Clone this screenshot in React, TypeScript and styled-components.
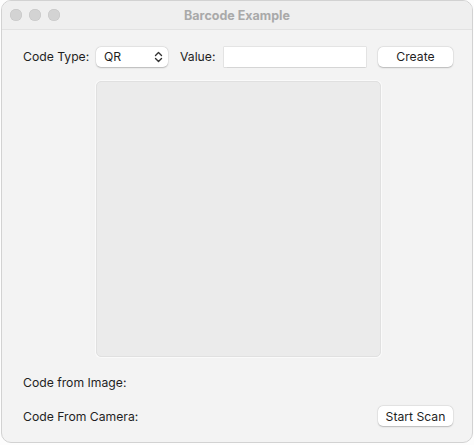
import React, { useState } from 'react'
import styled, { createGlobalStyle } from 'styled-components'

const GlobalStyle = createGlobalStyle`
  html, body {
    margin: 0;
    padding: 0;
    background: #fdfdfd;
  }
  body {
    font-family: Inter, "Liberation Sans", Arial, sans-serif;
    -webkit-font-smoothing: antialiased;
  }
`

const Window = styled.div`
  box-sizing: border-box;
  width: 472px;
  height: 443px;
  margin-left: 1px;
  background: #f3f3f3;
  border: 1px solid #d2d2d2;
  border-radius: 10px;
  overflow: hidden;
  display: flex;
  flex-direction: column;
`

const TitleBar = styled.div`
  position: relative;
  height: 28px;
  flex: none;
  background: #efefef;
  border-bottom: 1px solid #e2e2e2;
  display: flex;
  align-items: center;
  justify-content: center;
`

const Lights = styled.div`
  position: absolute;
  left: 8px;
  top: 8px;
  display: flex;
  gap: 7px;
`

const Light = styled.span`
  width: 12px;
  height: 12px;
  border-radius: 50%;
  background: #d3d3d3;
  box-shadow: inset 0 0 0 0.5px #c4c4c4;
`

const Title = styled.div`
  font-size: 12.5px;
  font-weight: 700;
  color: #a9a9a9;
`

const Content = styled.div`
  flex: 1;
  display: flex;
  flex-direction: column;
  padding: 16px 19px 0 21px;
`

const Row = styled.div`
  display: flex;
  align-items: center;
  height: 21px;
`

const Label = styled.span<{ $width?: number }>`
  font-size: 12.2px;
  color: #1f1f1f;
  white-space: nowrap;
  ${({ $width }) => ($width ? `width: ${$width}px; flex: none;` : '')}
`

const PopUp = styled.div`
  box-sizing: border-box;
  width: 72px;
  height: 20px;
  background: #fff;
  border-radius: 5px;
  box-shadow: 0 0.5px 1.5px rgba(0, 0, 0, 0.22), 0 0 0 0.5px rgba(0, 0, 0, 0.06);
  display: flex;
  align-items: center;
  justify-content: space-between;
  padding: 0 5px 0 8px;
  font-size: 12.2px;
  color: #1f1f1f;
  margin-right: 12px;
`

const TextInput = styled.input`
  box-sizing: border-box;
  width: 142px;
  height: 20px;
  border: none;
  outline: none;
  background: #fff;
  box-shadow: 0 0 0 0.5px #d6d6d6, 0 0.5px 1px rgba(0, 0, 0, 0.12);
  padding: 0 4px;
  font: inherit;
  font-size: 12.2px;
`

const Button = styled.button`
  box-sizing: border-box;
  margin-left: auto;
  width: 75px;
  height: 20px;
  border: none;
  border-radius: 5px;
  background: #fff;
  box-shadow: 0 0.5px 1.5px rgba(0, 0, 0, 0.22), 0 0 0 0.5px rgba(0, 0, 0, 0.06);
  font: inherit;
  font-size: 12.2px;
  color: #1f1f1f;
  padding: 0;
`

const ImageWell = styled.div`
  box-sizing: border-box;
  align-self: center;
  width: 285px;
  height: 276px;
  margin: 14px 0 0 0;
  background: #ebebeb;
  border: 1px solid #e0e0e0;
  border-radius: 5px;
  box-shadow: 0 0 0 1px #fafafa;
`

const InfoRow = styled(Row)<{ $top: number }>`
  margin-top: ${({ $top }) => $top}px;
  height: 20px;
`

function Chevrons() {
  return (
    <svg width="9" height="12" viewBox="0 0 9 12" fill="none" stroke="#333" strokeWidth="1.4" strokeLinecap="round" strokeLinejoin="round">
      <path d="M1.5 4.5 L4.5 1.5 L7.5 4.5" />
      <path d="M1.5 7.5 L4.5 10.5 L7.5 7.5" />
    </svg>
  )
}

export default function App() {
  const [value, setValue] = useState('')
  return (
    <>
      <GlobalStyle />
      <Window>
        <TitleBar>
          <Lights>
            <Light />
            <Light />
            <Light />
          </Lights>
          <Title>Barcode Example</Title>
        </TitleBar>
        <Content>
          <Row>
            <Label $width={73}>Code Type:</Label>
            <PopUp>
              <span>QR</span>
              <Chevrons />
            </PopUp>
            <Label $width={44}>Value:</Label>
            <TextInput value={value} onChange={e => setValue(e.target.value)} />
            <Button>Create</Button>
          </Row>
          <ImageWell />
          <InfoRow $top={15}>
            <Label>Code from Image:</Label>
          </InfoRow>
          <InfoRow $top={14}>
            <Label>Code From Camera:</Label>
            <Button>Start Scan</Button>
          </InfoRow>
        </Content>
      </Window>
    </>
  )
}
